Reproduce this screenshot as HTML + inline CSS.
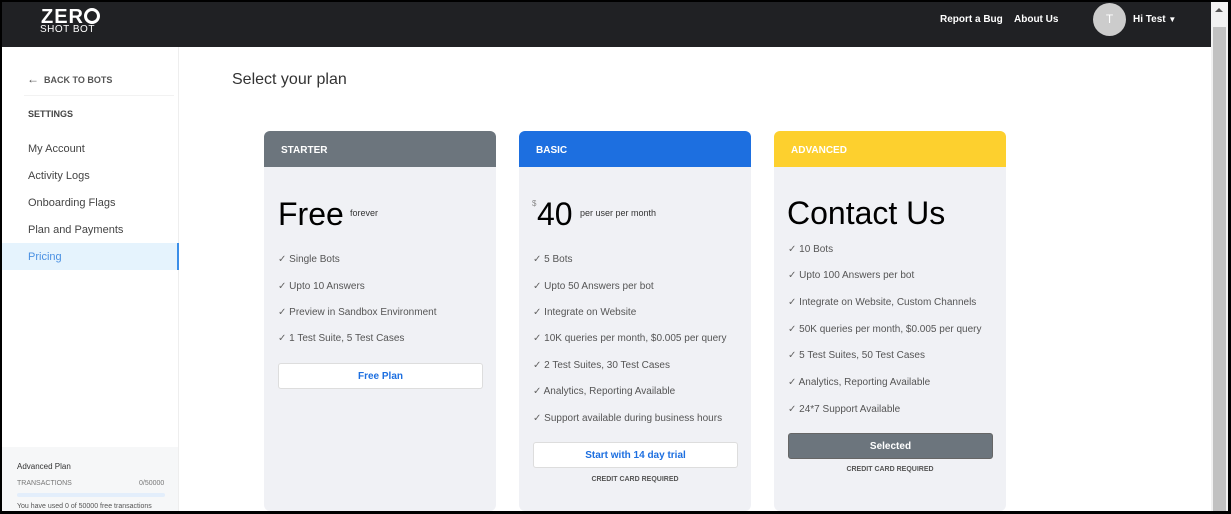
<!DOCTYPE html>
<html><head><style>
*{margin:0;padding:0;box-sizing:border-box}
body{width:1231px;height:514px;overflow:hidden;background:#fff;font-family:"Liberation Sans",Arial,sans-serif;position:relative}
.a{position:absolute;white-space:nowrap}
.hdr{left:0;top:0;width:1231px;height:47px;background:#202124}
.side{left:2px;top:47px;width:177px;height:467px;background:#fff;border-right:1px solid #eee}
.nav{font-size:11px;color:#444;left:28px}
.card{position:absolute;top:131px;width:232px;height:380px;background:#f0f1f5;border-radius:6px;overflow:hidden}
.ch{height:36px;color:#fff;font-weight:bold;font-size:10px;padding:14px 0 0 17px}
.f{position:absolute;left:14px;font-size:10px;color:#555;margin-top:1px}
.f:before{content:"✓ ";color:#666}
.btn{position:absolute;left:14px;width:205px;height:26px;background:#fff;border:1px solid #ddd;border-radius:3px;text-align:center;font-size:10px;font-weight:bold;color:#1d6fe0;line-height:26px}
.cc{position:absolute;left:0;width:232px;text-align:center;font-size:7px;font-weight:bold;color:#555}
</style></head><body>
<div class="a hdr"></div>
<div class="a" style="left:41px;top:7px;color:#fff;font-weight:900;font-size:20px;letter-spacing:1px;line-height:20px">ZER<span style="display:inline-block;width:16px;height:16px;border:3px solid #fff;border-radius:50%;vertical-align:-1px"></span></div>
<div class="a" style="left:40px;top:24px;color:#fff;font-size:10px;letter-spacing:.5px">SHOT BOT</div>
<div class="a" style="left:940px;top:14px;color:#fff;font-size:10px;font-weight:bold">Report a Bug</div>
<div class="a" style="left:1014px;top:14px;color:#fff;font-size:10px;font-weight:bold">About Us</div>
<div class="a" style="left:1093px;top:3px;width:33px;height:33px;border-radius:50%;background:#ccc;color:#fff;font-size:12px;text-align:center;line-height:33px">T</div>
<div class="a" style="left:1133px;top:14px;color:#fff;font-size:10px;font-weight:bold">Hi Test <span style="font-size:8px">▼</span></div>

<div class="a side"></div>
<div class="a" style="left:27px;top:72px;font-size:12px;color:#555">←</div>
<div class="a" style="left:44px;top:75px;font-size:9px;font-weight:bold;color:#555">BACK TO BOTS</div>
<div class="a" style="left:24px;top:95px;width:150px;height:1px;background:#f2f2f2"></div>
<div class="a" style="left:28px;top:109px;font-size:9px;font-weight:bold;color:#444">SETTINGS</div>
<div class="a nav" style="top:143px">My Account</div>
<div class="a nav" style="top:170px">Activity Logs</div>
<div class="a nav" style="top:197px">Onboarding Flags</div>
<div class="a nav" style="top:224px">Plan and Payments</div>
<div class="a" style="left:2px;top:243px;width:177px;height:27px;background:#e5f3fd;border-right:2px solid #3b8ee8"></div>
<div class="a nav" style="top:251px;color:#4a90e2">Pricing</div>
<div class="a" style="left:2px;top:447px;width:176px;height:67px;background:#f6f7f8"></div>
<div class="a" style="left:17px;top:462px;font-size:8px;color:#333">Advanced Plan</div>
<div class="a" style="left:17px;top:480px;font-size:7px;color:#777">TRANSACTIONS</div>
<div class="a" style="left:139px;top:480px;font-size:7px;color:#777">0/50000</div>
<div class="a" style="left:17px;top:493px;width:148px;height:4px;background:#e3eefb;border-radius:2px"></div>
<div class="a" style="left:17px;top:503px;font-size:7px;color:#555">You have used 0 of 50000 free transactions</div>

<div class="a" style="left:232px;top:71px;font-size:16px;color:#333">Select your plan</div>

<div class="card" style="left:264px">
<div class="ch" style="background:#6c757d">STARTER</div>
<div class="a" style="left:14px;top:65px;font-size:32px;color:#000">Free</div>
<div class="a" style="left:86px;top:77px;font-size:9px;color:#333">forever</div>
<div class="f" style="top:122px">Single Bots</div>
<div class="f" style="top:149px">Upto 10 Answers</div>
<div class="f" style="top:175px">Preview in Sandbox Environment</div>
<div class="f" style="top:201px">1 Test Suite, 5 Test Cases</div>
<div class="btn" style="top:232px">Free Plan</div>
</div>

<div class="card" style="left:519px">
<div class="ch" style="background:#1d6fe0">BASIC</div>
<div class="a" style="left:13px;top:68px;font-size:8px;color:#888">$</div>
<div class="a" style="left:18px;top:65px;font-size:32px;color:#000">40</div>
<div class="a" style="left:61px;top:77px;font-size:9px;color:#333">per user per month</div>
<div class="f" style="top:122px">5 Bots</div>
<div class="f" style="top:149px">Upto 50 Answers per bot</div>
<div class="f" style="top:175px">Integrate on Website</div>
<div class="f" style="top:201px">10K queries per month, $0.005 per query</div>
<div class="f" style="top:228px">2 Test Suites, 30 Test Cases</div>
<div class="f" style="top:254px">Analytics, Reporting Available</div>
<div class="f" style="top:281px">Support available during business hours</div>
<div class="btn" style="top:311px">Start with 14 day trial</div>
<div class="cc" style="top:345px">CREDIT CARD REQUIRED</div>
</div>

<div class="card" style="left:774px">
<div class="ch" style="background:#fdd02e">ADVANCED</div>
<div class="a" style="left:13px;top:64px;font-size:32px;color:#000">Contact Us</div>
<div class="f" style="top:112px">10 Bots</div>
<div class="f" style="top:138px">Upto 100 Answers per bot</div>
<div class="f" style="top:165px">Integrate on Website, Custom Channels</div>
<div class="f" style="top:192px">50K queries per month, $0.005 per query</div>
<div class="f" style="top:218px">5 Test Suites, 50 Test Cases</div>
<div class="f" style="top:245px">Analytics, Reporting Available</div>
<div class="f" style="top:272px">24*7 Support Available</div>
<div class="btn" style="top:302px;background:#6c757d;border-color:#666;color:#fff">Selected</div>
<div class="cc" style="top:335px">CREDIT CARD REQUIRED</div>
</div>

<div class="a" style="left:1211px;top:2px;width:17px;height:510px;background:#f1f1f1"></div>
<div class="a" style="left:1213px;top:27px;width:13px;height:485px;background:#c1c1c1"></div>
<div class="a" style="left:1215px;top:8px;width:0;height:0;border:4px solid transparent;border-bottom:4px solid #555;border-top:0"></div>
<div class="a" style="left:0;top:0;width:1231px;height:514px;border:2px solid #000;border-bottom-width:3px;border-right-width:3px"></div>
</body></html>
